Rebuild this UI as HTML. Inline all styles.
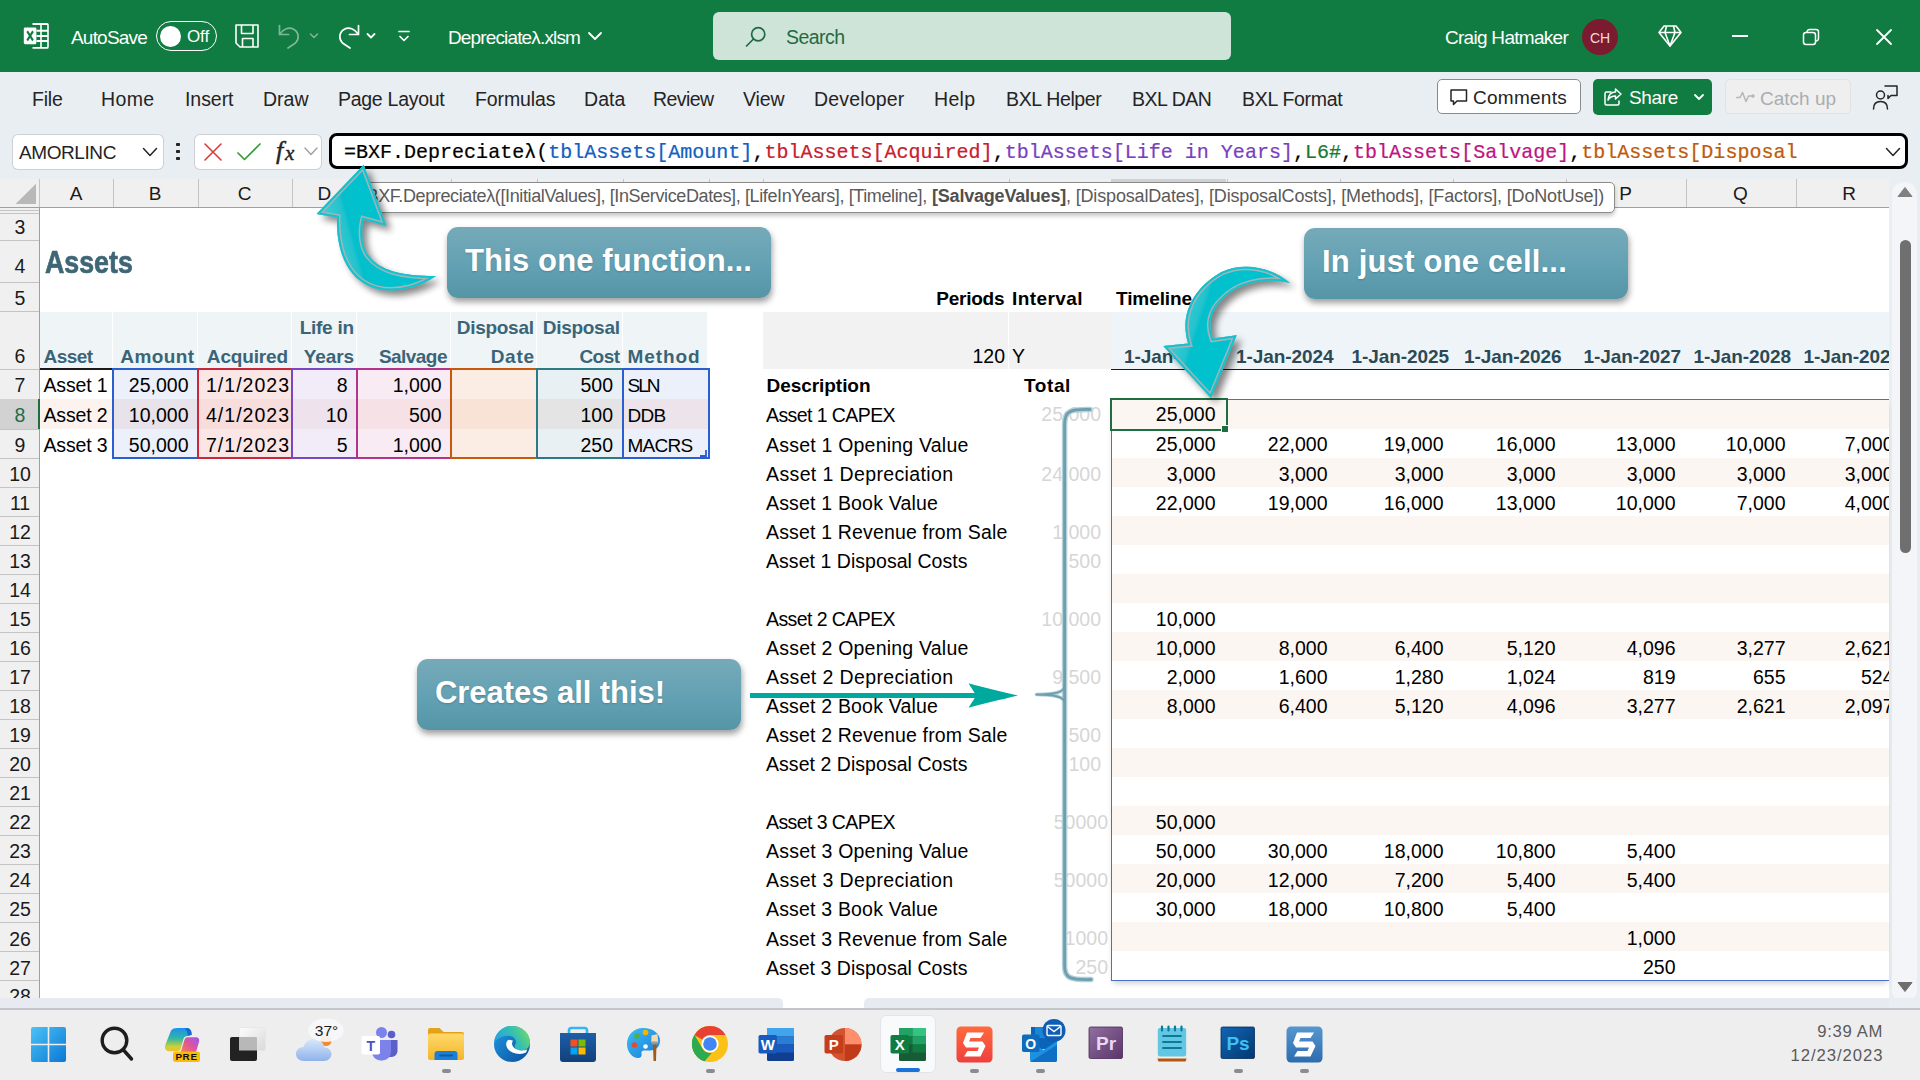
<!DOCTYPE html>
<html><head><meta charset="utf-8"><title>DepreciateLambda.xlsm - Excel</title>
<style>
html,body{margin:0;padding:0;}
body{width:1920px;height:1080px;overflow:hidden;position:relative;background:#fff;font-family:'Liberation Sans',sans-serif;}
div,span.t,svg{position:absolute;}
div{box-sizing:border-box;}
span.t{white-space:pre;}
</style></head>
<body>
<div style="left:0px;top:0px;width:1920px;height:72px;background:#107c41;"></div>
<div style="left:0px;top:72px;width:1920px;height:107px;background:#e9eef2;"></div>
<svg style="left:21.8px;top:19.8px" width="28" height="31.8" viewBox="0 0 28 26" preserveAspectRatio="none" fill="none" stroke="#fff" stroke-width="1.6">
<path d="M10.5 3.2H25a1 1 0 0 1 1 1v17.6a1 1 0 0 1-1 1H10.5"/><path d="M14.5 8.8H26M14.5 13H26M14.5 17.2H26M19 3.2v19.6"/>
<rect x="1.8" y="6.2" width="12.6" height="13.6" rx="1.2" fill="#fff" stroke="none"/>
<path d="M5.2 9.2l5.8 7.6M11 9.2l-5.8 7.6" stroke="#107c41" stroke-width="2"/></svg>
<span class="t" style="left:71.00px;top:24.50px;line-height:25px;font-size:19px;color:#fff;letter-spacing:-0.801px;">AutoSave</span>
<div style="left:156px;top:21px;width:61px;height:30px;border:1.5px solid #fff;border-radius:15px;"></div>
<div style="left:159.7px;top:25.5px;width:21px;height:21px;background:#fff;border-radius:10.5px;"></div>
<span class="t" style="left:187.00px;top:26.00px;line-height:22px;font-size:17px;color:#fff;letter-spacing:-0.125px;">Off</span>
<svg style="left:234px;top:23px" width="26" height="26" viewBox="0 0 26 26" fill="none" stroke="#fff" stroke-width="1.6" stroke-linejoin="round">
<path d="M2 2H24V24H6L2 20z"/>
<path d="M7.500 2v8.500h11.500V2M8.500 24v-8.500h10.500V24"/></svg>
<svg style="left:277px;top:22px" width="46" height="28" viewBox="0 0 46 28" fill="none" stroke="#7fb69a" stroke-width="1.7" stroke-linecap="round" stroke-linejoin="round">
<path d="M2.500 3.500v9h9"/><path d="M2.800 12.300C6 7 12 4.500 17 7.500c5 3 5.500 9.500 1.500 13.500L11 26"/>
<path d="M33.500 12l3.500 3.500 3.500-3.500" stroke-width="1.5"/></svg>
<svg style="left:334px;top:22px" width="46" height="28" viewBox="0 0 46 28" fill="none" stroke="#fff" stroke-width="1.7" stroke-linecap="round" stroke-linejoin="round">
<path d="M24.500 3.500v9h-9"/><path d="M24.200 12.300C21 7 15 4.500 10 7.500c-5 3-5.500 9.500-1.500 13.500L16 26"/>
<path d="M33.500 12l3.500 3.500 3.500-3.500" stroke-width="1.8"/></svg>
<svg style="left:397px;top:29px" width="14" height="14" viewBox="0 0 14 14" fill="none" stroke="#fff" stroke-width="1.7" stroke-linecap="round" stroke-linejoin="round">
<path d="M2 2.500h10"/><path d="M3 7.500l4 4 4-4"/></svg>
<span class="t" style="left:448.00px;top:24.50px;line-height:25px;font-size:19px;color:#fff;letter-spacing:-0.857px;">Depreciateλ.xlsm</span>
<svg style="left:587px;top:31px" width="16" height="10" viewBox="0 0 16 10" fill="none" stroke="#fff" stroke-width="1.8" stroke-linecap="round" stroke-linejoin="round"><path d="M2 2l6 6 6-6"/></svg>
<div style="left:713px;top:12px;width:518px;height:48px;background:#cfe4d8;border-radius:6px;"></div>
<svg style="left:744px;top:25px" width="24" height="24" viewBox="0 0 24 24" fill="none" stroke="#1f6a43" stroke-width="1.7" stroke-linecap="round"><circle cx="14.200" cy="9.200" r="6.600"/><path d="M9.500 14L2.500 21"/></svg>
<span class="t" style="left:786.00px;top:24.50px;line-height:25px;font-size:19.5px;color:#1f6a43;letter-spacing:-0.549px;">Search</span>
<span class="t" style="left:1445.00px;top:24.50px;line-height:25px;font-size:19px;color:#fff;letter-spacing:-0.718px;">Craig Hatmaker</span>
<div style="left:1582px;top:19px;width:36px;height:36px;background:#7b1b2f;border-radius:18px;"></div>
<span class="t" style="left:1589.88px;top:28.50px;line-height:18px;font-size:14px;color:#f3d9de;">CH</span>
<svg style="left:1657px;top:24px" width="26" height="24" viewBox="0 0 26 24" fill="none" stroke="#fff" stroke-width="1.6" stroke-linejoin="round">
<path d="M7 2h12l5 6.500L13 22 2 8.500z"/><path d="M2 8.500h22M9.500 2L8 8.500 13 22l5-13.500L16.500 2"/></svg>
<div style="left:1732px;top:35px;width:16px;height:2px;background:#fff;"></div>
<svg style="left:1802px;top:28px" width="18" height="18" viewBox="0 0 18 18" fill="none" stroke="#fff" stroke-width="1.5"><rect x="1.500" y="4.500" width="12" height="12" rx="2.500"/><path d="M5 4.500V4a2.500 2.500 0 0 1 2.500-2.500H14A2.500 2.500 0 0 1 16.500 4v6.500A2.500 2.500 0 0 1 14 13h-.5"/></svg>
<svg style="left:1875px;top:28px" width="18" height="18" viewBox="0 0 18 18" fill="none" stroke="#fff" stroke-width="1.800" stroke-linecap="round"><path d="M2 2l14 14M16 2L2 16"/></svg>
<span class="t" style="left:32.00px;top:86.90px;line-height:25px;font-size:19.5px;color:#242424;letter-spacing:-0.230px;">File</span>
<span class="t" style="left:101.00px;top:86.90px;line-height:25px;font-size:19.5px;color:#242424;letter-spacing:0.367px;">Home</span>
<span class="t" style="left:185.00px;top:86.90px;line-height:25px;font-size:19.5px;color:#242424;letter-spacing:-0.047px;">Insert</span>
<span class="t" style="left:263.00px;top:86.90px;line-height:25px;font-size:19.5px;color:#242424;">Draw</span>
<span class="t" style="left:338.00px;top:86.90px;line-height:25px;font-size:19.5px;color:#242424;letter-spacing:-0.274px;">Page Layout</span>
<span class="t" style="left:475.00px;top:86.90px;line-height:25px;font-size:19.5px;color:#242424;letter-spacing:-0.098px;">Formulas</span>
<span class="t" style="left:584.00px;top:86.90px;line-height:25px;font-size:19.5px;color:#242424;letter-spacing:0.074px;">Data</span>
<span class="t" style="left:653.00px;top:86.90px;line-height:25px;font-size:19.5px;color:#242424;letter-spacing:-0.573px;">Review</span>
<span class="t" style="left:743.00px;top:86.90px;line-height:25px;font-size:19.5px;color:#242424;letter-spacing:-0.105px;">View</span>
<span class="t" style="left:814.00px;top:86.90px;line-height:25px;font-size:19.5px;color:#242424;letter-spacing:0.179px;">Developer</span>
<span class="t" style="left:934.00px;top:86.90px;line-height:25px;font-size:19.5px;color:#242424;letter-spacing:0.348px;">Help</span>
<span class="t" style="left:1006.00px;top:86.90px;line-height:25px;font-size:19.5px;color:#242424;letter-spacing:-0.350px;">BXL Helper</span>
<span class="t" style="left:1132.00px;top:86.90px;line-height:25px;font-size:19.5px;color:#242424;letter-spacing:-0.462px;">BXL DAN</span>
<span class="t" style="left:1242.00px;top:86.90px;line-height:25px;font-size:19.5px;color:#242424;letter-spacing:-0.281px;">BXL Format</span>
<div style="left:1437px;top:78.7px;width:144px;height:35.6px;background:#fff;border:1px solid #8a8a8a;border-radius:5px;"></div>
<svg style="left:1449px;top:88px" width="20" height="19" viewBox="0 0 20 19" fill="none" stroke="#242424" stroke-width="1.500" stroke-linejoin="round"><path d="M2 2h15.500v11H8l-3.500 3.500V13H2z"/></svg>
<span class="t" style="left:1473.00px;top:85.00px;line-height:25px;font-size:19px;color:#242424;letter-spacing:0.268px;">Comments</span>
<div style="left:1593px;top:79px;width:119px;height:36px;background:#107c41;border-radius:5px;"></div>
<svg style="left:1603px;top:87px" width="20" height="20" viewBox="0 0 20 20" fill="none" stroke="#fff" stroke-width="1.500" stroke-linejoin="round" stroke-linecap="round"><path d="M8 5H3.500A1.500 1.500 0 0 0 2 6.500v10A1.500 1.500 0 0 0 3.500 18h11a1.500 1.500 0 0 0 1.500-1.500V14"/><path d="M12.500 2l5.500 5-5.500 5V9c-4 0-6 1.500-7.500 4 .5-5 3-8 7.500-8z"/></svg>
<span class="t" style="left:1629.00px;top:85.00px;line-height:25px;font-size:19px;color:#fff;letter-spacing:-0.341px;">Share</span>
<svg style="left:1693px;top:93px" width="12" height="8" viewBox="0 0 12 8" fill="none" stroke="#fff" stroke-width="1.800" stroke-linecap="round" stroke-linejoin="round"><path d="M2 2l4 4 4-4"/></svg>
<div style="left:1724.5px;top:79.3px;width:126px;height:35.2px;background:#efefef;border:1px solid #e2e2e2;border-radius:5px;"></div>
<svg style="left:1735px;top:90px" width="22" height="14" viewBox="0 0 22 14" fill="none" stroke="#b3b7bb" stroke-width="1.500" stroke-linejoin="round" stroke-linecap="round"><path d="M1.500 7.500h3.500l2.500-5 3.500 9 2.500-5.500h3"/><circle cx="18" cy="6" r="1" fill="#b3b7bb"/></svg>
<span class="t" style="left:1760.00px;top:85.50px;line-height:25px;font-size:19px;color:#a9adb1;letter-spacing:-0.006px;">Catch up</span>
<svg style="left:1871px;top:84px" width="28" height="28" viewBox="0 0 28 28" fill="none" stroke="#242424" stroke-width="1.500" stroke-linejoin="round" stroke-linecap="round"><circle cx="9.500" cy="11" r="4"/><path d="M2.500 25c0-5 3-7.500 7-7.500s7 2.500 7 7.500"/><path d="M14 2h12v9.500h-6l-3 3V11.500"/></svg>
<div style="left:13px;top:135px;width:150px;height:33.5px;background:#fff;border-radius:5px;box-shadow:0 0 0 1px #cdd1d5;"></div>
<span class="t" style="left:19.00px;top:139.50px;line-height:25px;font-size:19px;color:#242424;letter-spacing:-0.412px;">AMORLINC</span>
<svg style="left:141px;top:146px" width="18" height="12" viewBox="0 0 18 12" fill="none" stroke="#242424" stroke-width="1.500" stroke-linecap="round" stroke-linejoin="round"><path d="M2.500 2.500l6.500 7 6.500-7"/></svg>
<div style="left:176.4px;top:143.2px;width:3.2px;height:3.2px;background:#242424;border-radius:0.800px;"></div>
<div style="left:176.4px;top:150.2px;width:3.2px;height:3.2px;background:#242424;border-radius:0.800px;"></div>
<div style="left:176.4px;top:157.2px;width:3.2px;height:3.2px;background:#242424;border-radius:0.800px;"></div>
<div style="left:195px;top:135px;width:126px;height:33.5px;background:#fff;border-radius:5px;box-shadow:0 0 0 1px #cdd1d5;"></div>
<svg style="left:203px;top:142px" width="20" height="20" viewBox="0 0 20 20" fill="none" stroke="#d83b3b" stroke-width="1.600" stroke-linecap="round"><path d="M2 2l16 16M18 2L2 18"/></svg>
<svg style="left:236px;top:142px" width="26" height="20" viewBox="0 0 26 20" fill="none" stroke="#3a9a3a" stroke-width="1.700" stroke-linecap="round" stroke-linejoin="round"><path d="M2 11l6.500 6.500L24 2"/></svg>
<span class="t" style="left:276.00px;top:134.00px;line-height:34px;font-size:26px;color:#242424;font-style:italic;font-family:'Liberation Serif';-webkit-text-stroke:0.450px #242424;">f</span>
<span class="t" style="left:285.00px;top:139.50px;line-height:27px;font-size:21px;color:#242424;font-style:italic;font-family:'Liberation Serif';-webkit-text-stroke:0.450px #242424;">x</span>
<svg style="left:303px;top:146px" width="16" height="11" viewBox="0 0 16 11" fill="none" stroke="#a0a0a0" stroke-width="1.400" stroke-linecap="round" stroke-linejoin="round"><path d="M2 2l6 6.500 6-6.500"/></svg>
<div style="left:328.5px;top:133px;width:1579.5px;height:36.3px;background:#fff;border:3px solid #000;border-radius:8px;"></div>
<svg style="left:1884px;top:146px" width="18" height="12" viewBox="0 0 18 12" fill="none" stroke="#242424" stroke-width="1.500" stroke-linecap="round" stroke-linejoin="round"><path d="M2.500 2.500l6.500 7 6.500-7"/></svg>
<span class="t" style="left:344px;top:139.800px;line-height:26px;font-size:20.02px;font-family:'Liberation Mono',monospace;-webkit-text-stroke:0.220px currentColor;"><span style="color:#000">=BXF.Depreciateλ(</span><span style="color:#1160c2">tblAssets[Amount]</span><span style="color:#000">,</span><span style="color:#c9202c">tblAssets[Acquired]</span><span style="color:#000">,</span><span style="color:#7a3fc0">tblAssets[Life in Years]</span><span style="color:#000">,</span><span style="color:#1b7a2f">L6#</span><span style="color:#000">,</span><span style="color:#c0147f">tblAssets[Salvage]</span><span style="color:#000">,</span><span style="color:#c05a0a">tblAssets[Disposal</span></span>
<div style="left:0px;top:179px;width:1889px;height:29px;background:#f0f0f0;border-bottom:1px solid #9f9f9f;"></div>
<svg style="left:15px;top:183px" width="22" height="22" viewBox="0 0 22 22"><path d="M0.500 21L21 0.800V21z" fill="#b8b8b8"/></svg>
<div style="left:112.7px;top:179px;width:1px;height:28px;background:#c4c4c4;"></div>
<span class="t" style="left:69.66px;top:181.00px;line-height:25px;font-size:19px;color:#1a1a1a;">A</span>
<div style="left:197.7px;top:179px;width:1px;height:28px;background:#c4c4c4;"></div>
<span class="t" style="left:148.66px;top:181.00px;line-height:25px;font-size:19px;color:#1a1a1a;">B</span>
<div style="left:291.9px;top:179px;width:1px;height:28px;background:#c4c4c4;"></div>
<span class="t" style="left:237.73px;top:181.00px;line-height:25px;font-size:19px;color:#1a1a1a;">C</span>
<div style="left:357.0px;top:179px;width:1px;height:28px;background:#c4c4c4;"></div>
<span class="t" style="left:317.38px;top:181.00px;line-height:25px;font-size:19px;color:#1a1a1a;">D</span>
<div style="left:451.0px;top:179px;width:1px;height:28px;background:#c4c4c4;"></div>
<div style="left:537.1px;top:179px;width:1px;height:28px;background:#c4c4c4;"></div>
<div style="left:623.1px;top:179px;width:1px;height:28px;background:#c4c4c4;"></div>
<div style="left:708.5px;top:179px;width:1px;height:28px;background:#c4c4c4;"></div>
<div style="left:763.2px;top:179px;width:1px;height:28px;background:#c4c4c4;"></div>
<div style="left:1008.5px;top:179px;width:1px;height:28px;background:#c4c4c4;"></div>
<div style="left:1111.0px;top:179px;width:1px;height:28px;background:#c4c4c4;"></div>
<div style="left:1226.7px;top:179px;width:1px;height:28px;background:#c4c4c4;"></div>
<div style="left:1340.2px;top:179px;width:1px;height:28px;background:#c4c4c4;"></div>
<div style="left:1453.2px;top:179px;width:1px;height:28px;background:#c4c4c4;"></div>
<div style="left:1565.7px;top:179px;width:1px;height:28px;background:#c4c4c4;"></div>
<div style="left:1685.7px;top:179px;width:1px;height:28px;background:#c4c4c4;"></div>
<span class="t" style="left:1619.16px;top:181.00px;line-height:25px;font-size:19px;color:#1a1a1a;">P</span>
<div style="left:1795.7px;top:179px;width:1px;height:28px;background:#c4c4c4;"></div>
<span class="t" style="left:1733.11px;top:181.00px;line-height:25px;font-size:19px;color:#1a1a1a;">Q</span>
<div style="left:1905.2px;top:179px;width:1px;height:28px;background:#c4c4c4;"></div>
<span class="t" style="left:1842.13px;top:181.00px;line-height:25px;font-size:19px;color:#1a1a1a;">R</span>
<div style="left:39px;top:179px;width:1px;height:28px;background:#c4c4c4;"></div>
<div style="left:1110.8px;top:179px;width:115.20000000000005px;height:28px;background:#d2d2d2;border-bottom:2px solid #1e6e42;"></div>
<div style="left:0px;top:208px;width:1889px;height:800px;background:#fff;"></div>
<div style="left:0px;top:208px;width:39.5px;height:790px;background:#f0f0f0;border-right:1px solid #9f9f9f;"></div>
<div style="left:0px;top:209.5px;width:39px;height:1px;background:#c4c4c4;"></div>
<div style="left:0px;top:212.5px;width:39px;height:1px;background:#c4c4c4;"></div>
<div style="left:0px;top:240.0px;width:39px;height:1px;background:#c4c4c4;"></div>
<div style="left:0px;top:282.1px;width:39px;height:1px;background:#c4c4c4;"></div>
<div style="left:0px;top:310.7px;width:39px;height:1px;background:#c4c4c4;"></div>
<div style="left:0px;top:368.8px;width:39px;height:1px;background:#c4c4c4;"></div>
<div style="left:0px;top:399px;width:39px;height:1px;background:#c4c4c4;"></div>
<div style="left:0px;top:428.5px;width:39px;height:1px;background:#c4c4c4;"></div>
<div style="left:0px;top:457.6px;width:39px;height:1px;background:#c4c4c4;"></div>
<div style="left:0px;top:486.63px;width:39px;height:1px;background:#c4c4c4;"></div>
<div style="left:0px;top:515.66px;width:39px;height:1px;background:#c4c4c4;"></div>
<div style="left:0px;top:544.69px;width:39px;height:1px;background:#c4c4c4;"></div>
<div style="left:0px;top:573.72px;width:39px;height:1px;background:#c4c4c4;"></div>
<div style="left:0px;top:602.75px;width:39px;height:1px;background:#c4c4c4;"></div>
<div style="left:0px;top:631.78px;width:39px;height:1px;background:#c4c4c4;"></div>
<div style="left:0px;top:660.81px;width:39px;height:1px;background:#c4c4c4;"></div>
<div style="left:0px;top:689.84px;width:39px;height:1px;background:#c4c4c4;"></div>
<div style="left:0px;top:718.87px;width:39px;height:1px;background:#c4c4c4;"></div>
<div style="left:0px;top:747.9px;width:39px;height:1px;background:#c4c4c4;"></div>
<div style="left:0px;top:776.93px;width:39px;height:1px;background:#c4c4c4;"></div>
<div style="left:0px;top:805.96px;width:39px;height:1px;background:#c4c4c4;"></div>
<div style="left:0px;top:834.99px;width:39px;height:1px;background:#c4c4c4;"></div>
<div style="left:0px;top:864.02px;width:39px;height:1px;background:#c4c4c4;"></div>
<div style="left:0px;top:893.05px;width:39px;height:1px;background:#c4c4c4;"></div>
<div style="left:0px;top:922.08px;width:39px;height:1px;background:#c4c4c4;"></div>
<div style="left:0px;top:951.11px;width:39px;height:1px;background:#c4c4c4;"></div>
<div style="left:0px;top:980.14px;width:39px;height:1px;background:#c4c4c4;"></div>
<div style="left:0px;top:399px;width:39.5px;height:29.5px;background:#d2d2d2;border-right:2px solid #1e6e42;"></div>
<span class="t" style="left:14.57px;top:214.75px;line-height:25px;font-size:19.5px;color:#1a1a1a;">3</span>
<span class="t" style="left:14.57px;top:253.50px;line-height:25px;font-size:19.5px;color:#1a1a1a;">4</span>
<span class="t" style="left:14.57px;top:286.00px;line-height:25px;font-size:19.5px;color:#1a1a1a;">5</span>
<span class="t" style="left:14.57px;top:344.00px;line-height:25px;font-size:19.5px;color:#1a1a1a;">6</span>
<span class="t" style="left:14.57px;top:372.80px;line-height:25px;font-size:19.5px;color:#1a1a1a;">7</span>
<span class="t" style="left:14.57px;top:402.80px;line-height:25px;font-size:19.5px;color:#1e6e42;">8</span>
<span class="t" style="left:14.57px;top:432.80px;line-height:25px;font-size:19.5px;color:#1a1a1a;">9</span>
<span class="t" style="left:9.15px;top:462.03px;line-height:25px;font-size:19.5px;color:#1a1a1a;">10</span>
<span class="t" style="left:9.88px;top:491.06px;line-height:25px;font-size:19.5px;color:#1a1a1a;">11</span>
<span class="t" style="left:9.15px;top:520.09px;line-height:25px;font-size:19.5px;color:#1a1a1a;">12</span>
<span class="t" style="left:9.15px;top:549.12px;line-height:25px;font-size:19.5px;color:#1a1a1a;">13</span>
<span class="t" style="left:9.15px;top:578.15px;line-height:25px;font-size:19.5px;color:#1a1a1a;">14</span>
<span class="t" style="left:9.15px;top:607.18px;line-height:25px;font-size:19.5px;color:#1a1a1a;">15</span>
<span class="t" style="left:9.15px;top:636.21px;line-height:25px;font-size:19.5px;color:#1a1a1a;">16</span>
<span class="t" style="left:9.15px;top:665.24px;line-height:25px;font-size:19.5px;color:#1a1a1a;">17</span>
<span class="t" style="left:9.15px;top:694.27px;line-height:25px;font-size:19.5px;color:#1a1a1a;">18</span>
<span class="t" style="left:9.15px;top:723.30px;line-height:25px;font-size:19.5px;color:#1a1a1a;">19</span>
<span class="t" style="left:9.15px;top:752.33px;line-height:25px;font-size:19.5px;color:#1a1a1a;">20</span>
<span class="t" style="left:9.15px;top:781.36px;line-height:25px;font-size:19.5px;color:#1a1a1a;">21</span>
<span class="t" style="left:9.15px;top:810.39px;line-height:25px;font-size:19.5px;color:#1a1a1a;">22</span>
<span class="t" style="left:9.15px;top:839.42px;line-height:25px;font-size:19.5px;color:#1a1a1a;">23</span>
<span class="t" style="left:9.15px;top:868.45px;line-height:25px;font-size:19.5px;color:#1a1a1a;">24</span>
<span class="t" style="left:9.15px;top:897.48px;line-height:25px;font-size:19.5px;color:#1a1a1a;">25</span>
<span class="t" style="left:9.15px;top:926.51px;line-height:25px;font-size:19.5px;color:#1a1a1a;">26</span>
<span class="t" style="left:9.15px;top:955.54px;line-height:25px;font-size:19.5px;color:#1a1a1a;">27</span>
<span class="t" style="left:9.15px;top:983.50px;line-height:25px;font-size:19.5px;color:#1a1a1a;">28</span>
<span class="t" style="left:44.50px;top:241.50px;line-height:41px;font-size:31.5px;color:#3f6676;font-weight:700;transform:scaleX(0.850);transform-origin:0 50%;-webkit-text-stroke:0.700px #3f6676;">Assets</span>
<div style="left:40.0px;top:312px;width:71.5px;height:57px;background:#eff4f7;"></div>
<div style="left:113.0px;top:312px;width:83.5px;height:57px;background:#eff4f7;"></div>
<div style="left:198.0px;top:312px;width:92.69999999999999px;height:57px;background:#eff4f7;"></div>
<div style="left:292.2px;top:312px;width:63.60000000000002px;height:57px;background:#eff4f7;"></div>
<div style="left:357.3px;top:312px;width:92.5px;height:57px;background:#eff4f7;"></div>
<div style="left:451.3px;top:312px;width:84.59999999999997px;height:57px;background:#eff4f7;"></div>
<div style="left:537.4px;top:312px;width:84.5px;height:57px;background:#eff4f7;"></div>
<div style="left:623.4px;top:312px;width:83.89999999999998px;height:57px;background:#eff4f7;"></div>
<div style="left:39.5px;top:368px;width:73px;height:1.5px;background:#1a1a1a;"></div>
<span class="t" style="left:43.50px;top:343.50px;line-height:25px;font-size:19px;color:#3a6577;font-weight:700;letter-spacing:-0.550px;">Asset</span>
<span class="t" style="left:120.37px;top:343.50px;line-height:25px;font-size:19px;color:#3a6577;font-weight:700;letter-spacing:0.372px;">Amount</span>
<span class="t" style="left:206.83px;top:343.50px;line-height:25px;font-size:19px;color:#3a6577;font-weight:700;letter-spacing:-0.170px;">Acquired</span>
<span class="t" style="left:299.72px;top:314.50px;line-height:25px;font-size:19px;color:#3a6577;font-weight:700;letter-spacing:-0.279px;">Life in</span>
<span class="t" style="left:303.85px;top:343.50px;line-height:25px;font-size:19px;color:#3a6577;font-weight:700;letter-spacing:-0.147px;">Years</span>
<span class="t" style="left:378.95px;top:343.50px;line-height:25px;font-size:19px;color:#3a6577;font-weight:700;letter-spacing:-0.547px;">Salvage</span>
<span class="t" style="left:456.72px;top:314.50px;line-height:25px;font-size:19px;color:#3a6577;font-weight:700;letter-spacing:-0.275px;">Disposal</span>
<span class="t" style="left:490.70px;top:343.50px;line-height:25px;font-size:19px;color:#3a6577;font-weight:700;letter-spacing:0.703px;">Date</span>
<span class="t" style="left:542.72px;top:314.50px;line-height:25px;font-size:19px;color:#3a6577;font-weight:700;letter-spacing:-0.275px;">Disposal</span>
<span class="t" style="left:579.44px;top:343.50px;line-height:25px;font-size:19px;color:#3a6577;font-weight:700;letter-spacing:-0.559px;">Cost</span>
<span class="t" style="left:627.50px;top:343.50px;line-height:25px;font-size:19px;color:#3a6577;font-weight:700;letter-spacing:0.909px;">Method</span>
<div style="left:40px;top:399px;width:72.5px;height:29.5px;background:#fdf3ee;"></div>
<div style="left:112.5px;top:368.8px;width:86.0px;height:89.30000000000001px;background:#ecf0fa;"></div>
<div style="left:112.5px;top:399px;width:86.0px;height:29.5px;background:#e8e2ea;"></div>
<div style="left:197.5px;top:368.8px;width:95.19999999999999px;height:89.30000000000001px;background:#fbe6e6;"></div>
<div style="left:197.5px;top:399px;width:95.19999999999999px;height:29.5px;background:#f8dddd;"></div>
<div style="left:291.7px;top:368.8px;width:66.10000000000002px;height:89.30000000000001px;background:#f2ecf8;"></div>
<div style="left:291.7px;top:399px;width:66.10000000000002px;height:29.5px;background:#eee3ec;"></div>
<div style="left:356.8px;top:368.8px;width:95.0px;height:89.30000000000001px;background:#f9ebf3;"></div>
<div style="left:356.8px;top:399px;width:95.0px;height:29.5px;background:#f6e1e6;"></div>
<div style="left:450.8px;top:368.8px;width:87.09999999999997px;height:89.30000000000001px;background:#fbece4;"></div>
<div style="left:450.8px;top:399px;width:87.09999999999997px;height:29.5px;background:#f9e2d6;"></div>
<div style="left:536.9px;top:368.8px;width:87.0px;height:89.30000000000001px;background:#e9f0f3;"></div>
<div style="left:536.9px;top:399px;width:87.0px;height:29.5px;background:#e4e4e4;"></div>
<div style="left:622.9px;top:368.8px;width:86.39999999999998px;height:89.30000000000001px;background:#ecf0fa;"></div>
<div style="left:622.9px;top:399px;width:86.39999999999998px;height:29.5px;background:#ece4ea;"></div>
<div style="left:112.0px;top:368.3px;width:87.0px;height:90.30000000000001px;border:2px solid #2b5fd0;"></div>
<div style="left:197.0px;top:368.3px;width:96.19999999999999px;height:90.30000000000001px;border:2px solid #c9283c;"></div>
<div style="left:291.2px;top:368.3px;width:67.10000000000002px;height:90.30000000000001px;border:2px solid #7a47c1;"></div>
<div style="left:356.3px;top:368.3px;width:96.0px;height:90.30000000000001px;border:2px solid #b5338a;"></div>
<div style="left:450.3px;top:368.3px;width:88.09999999999997px;height:90.30000000000001px;border:2px solid #c8590a;"></div>
<div style="left:536.4px;top:368.3px;width:88.0px;height:90.30000000000001px;border:2px solid #2a7b84;"></div>
<div style="left:622.4px;top:368.3px;width:87.39999999999998px;height:90.30000000000001px;border:2px solid #2b5fd0;"></div>
<svg style="left:699px;top:449px" width="8" height="8" viewBox="0 0 8 8" fill="none" stroke="#2b5fd0" stroke-width="1.800"><path d="M7 1v6H1"/></svg>
<span class="t" style="left:43.50px;top:372.65px;line-height:25px;font-size:19.5px;color:#000;letter-spacing:-0.150px;">Asset 1</span>
<span class="t" style="left:128.84px;top:372.65px;line-height:25px;font-size:19.5px;color:#000;">25,000</span>
<span class="t" style="left:206.01px;top:372.65px;line-height:25px;font-size:19.5px;color:#000;letter-spacing:1.012px;">1/1/2023</span>
<span class="t" style="left:336.64px;top:372.65px;line-height:25px;font-size:19.5px;color:#000;">8</span>
<span class="t" style="left:392.69px;top:372.65px;line-height:25px;font-size:19.5px;color:#000;">1,000</span>
<span class="t" style="left:580.45px;top:372.65px;line-height:25px;font-size:19.5px;color:#000;">500</span>
<span class="t" style="left:627.50px;top:372.65px;line-height:25px;font-size:19px;color:#000;letter-spacing:-1.990px;">SLN</span>
<span class="t" style="left:43.50px;top:403.00px;line-height:25px;font-size:19.5px;color:#000;letter-spacing:-0.150px;">Asset 2</span>
<span class="t" style="left:128.84px;top:403.00px;line-height:25px;font-size:19.5px;color:#000;">10,000</span>
<span class="t" style="left:206.01px;top:403.00px;line-height:25px;font-size:19.5px;color:#000;letter-spacing:1.012px;">4/1/2023</span>
<span class="t" style="left:325.80px;top:403.00px;line-height:25px;font-size:19.5px;color:#000;">10</span>
<span class="t" style="left:408.95px;top:403.00px;line-height:25px;font-size:19.5px;color:#000;">500</span>
<span class="t" style="left:580.45px;top:403.00px;line-height:25px;font-size:19.5px;color:#000;">100</span>
<span class="t" style="left:627.50px;top:403.00px;line-height:25px;font-size:19px;color:#000;letter-spacing:-0.708px;">DDB</span>
<span class="t" style="left:43.50px;top:432.70px;line-height:25px;font-size:19.5px;color:#000;letter-spacing:-0.150px;">Asset 3</span>
<span class="t" style="left:128.84px;top:432.70px;line-height:25px;font-size:19.5px;color:#000;">50,000</span>
<span class="t" style="left:206.01px;top:432.70px;line-height:25px;font-size:19.5px;color:#000;letter-spacing:1.012px;">7/1/2023</span>
<span class="t" style="left:336.64px;top:432.70px;line-height:25px;font-size:19.5px;color:#000;">5</span>
<span class="t" style="left:392.69px;top:432.70px;line-height:25px;font-size:19.5px;color:#000;">1,000</span>
<span class="t" style="left:580.45px;top:432.70px;line-height:25px;font-size:19.5px;color:#000;">250</span>
<span class="t" style="left:627.50px;top:432.70px;line-height:25px;font-size:19px;color:#000;letter-spacing:-0.725px;">MACRS</span>
<div style="left:763px;top:312px;width:244.5px;height:57px;background:#f2f2f2;"></div>
<div style="left:1009px;top:312px;width:101.5px;height:57px;background:#f2f2f2;"></div>
<div style="left:1111px;top:312px;width:778px;height:57.7px;background:#eff4f8;border-bottom:1.500px solid #1a1a1a;"></div>
<span class="t" style="left:936.26px;top:285.50px;line-height:25px;font-size:19px;color:#000;font-weight:700;letter-spacing:-0.243px;">Periods</span>
<span class="t" style="left:1012.00px;top:285.50px;line-height:25px;font-size:19px;color:#000;font-weight:700;letter-spacing:0.426px;">Interval</span>
<span class="t" style="left:1116.00px;top:285.50px;line-height:25px;font-size:19px;color:#000;font-weight:700;letter-spacing:-0.092px;">Timeline</span>
<span class="t" style="left:972.45px;top:343.50px;line-height:25px;font-size:19.5px;color:#000;">120</span>
<span class="t" style="left:1012.00px;top:343.50px;line-height:25px;font-size:19.5px;color:#000;">Y</span>
<span class="t" style="left:766.50px;top:372.50px;line-height:25px;font-size:19px;color:#000;font-weight:700;letter-spacing:-0.048px;">Description</span>
<span class="t" style="left:1024.00px;top:372.50px;line-height:25px;font-size:19px;color:#000;font-weight:700;letter-spacing:0.603px;">Total</span>
<span class="t" style="left:1123.93px;top:343.50px;line-height:25px;font-size:19px;color:#2b4a55;font-weight:700;letter-spacing:-0.073px;">1-Jan-2023</span>
<span class="t" style="left:1235.93px;top:343.50px;line-height:25px;font-size:19px;color:#2b4a55;font-weight:700;letter-spacing:-0.073px;">1-Jan-2024</span>
<span class="t" style="left:1351.43px;top:343.50px;line-height:25px;font-size:19px;color:#2b4a55;font-weight:700;letter-spacing:-0.073px;">1-Jan-2025</span>
<span class="t" style="left:1463.93px;top:343.50px;line-height:25px;font-size:19px;color:#2b4a55;font-weight:700;letter-spacing:-0.073px;">1-Jan-2026</span>
<span class="t" style="left:1583.43px;top:343.50px;line-height:25px;font-size:19px;color:#2b4a55;font-weight:700;letter-spacing:-0.073px;">1-Jan-2027</span>
<span class="t" style="left:1693.43px;top:343.50px;line-height:25px;font-size:19px;color:#2b4a55;font-weight:700;letter-spacing:-0.073px;">1-Jan-2028</span>
<span class="t" style="left:1803.43px;top:343.50px;line-height:25px;font-size:19px;color:#2b4a55;font-weight:700;letter-spacing:-0.073px;">1-Jan-2029</span>
<div style="left:1111px;top:399px;width:778px;height:29.5px;background:#fcf6f3;"></div>
<div style="left:1111px;top:457.6px;width:778px;height:29.029999999999973px;background:#fcf6f3;"></div>
<div style="left:1111px;top:515.66px;width:778px;height:29.030000000000086px;background:#fcf6f3;"></div>
<div style="left:1111px;top:573.72px;width:778px;height:29.029999999999973px;background:#fcf6f3;"></div>
<div style="left:1111px;top:631.78px;width:778px;height:29.029999999999973px;background:#fcf6f3;"></div>
<div style="left:1111px;top:689.84px;width:778px;height:29.029999999999973px;background:#fcf6f3;"></div>
<div style="left:1111px;top:747.9px;width:778px;height:29.029999999999973px;background:#fcf6f3;"></div>
<div style="left:1111px;top:805.96px;width:778px;height:29.029999999999973px;background:#fcf6f3;"></div>
<div style="left:1111px;top:864.02px;width:778px;height:29.029999999999973px;background:#fcf6f3;"></div>
<div style="left:1111px;top:922.08px;width:778px;height:29.029999999999973px;background:#fcf6f3;"></div>
<span class="t" style="left:766.00px;top:402.60px;line-height:25px;font-size:19.5px;color:#000;letter-spacing:-0.582px;">Asset 1 CAPEX</span>
<span class="t" style="left:766.00px;top:432.60px;line-height:25px;font-size:19.5px;color:#000;letter-spacing:0.213px;">Asset 1 Opening Value</span>
<span class="t" style="left:766.00px;top:462.03px;line-height:25px;font-size:19.5px;color:#000;letter-spacing:0.378px;">Asset 1 Depreciation</span>
<span class="t" style="left:766.00px;top:491.06px;line-height:25px;font-size:19.5px;color:#000;letter-spacing:0.181px;">Asset 1 Book Value</span>
<span class="t" style="left:766.00px;top:520.09px;line-height:25px;font-size:19.5px;color:#000;letter-spacing:0.165px;">Asset 1 Revenue from Sale</span>
<span class="t" style="left:766.00px;top:549.12px;line-height:25px;font-size:19.5px;color:#000;letter-spacing:0.045px;">Asset 1 Disposal Costs</span>
<span class="t" style="left:766.00px;top:607.18px;line-height:25px;font-size:19.5px;color:#000;letter-spacing:-0.582px;">Asset 2 CAPEX</span>
<span class="t" style="left:766.00px;top:636.21px;line-height:25px;font-size:19.5px;color:#000;letter-spacing:0.213px;">Asset 2 Opening Value</span>
<span class="t" style="left:766.00px;top:665.24px;line-height:25px;font-size:19.5px;color:#000;letter-spacing:0.378px;">Asset 2 Depreciation</span>
<span class="t" style="left:766.00px;top:694.27px;line-height:25px;font-size:19.5px;color:#000;letter-spacing:0.181px;">Asset 2 Book Value</span>
<span class="t" style="left:766.00px;top:723.30px;line-height:25px;font-size:19.5px;color:#000;letter-spacing:0.165px;">Asset 2 Revenue from Sale</span>
<span class="t" style="left:766.00px;top:752.33px;line-height:25px;font-size:19.5px;color:#000;letter-spacing:0.045px;">Asset 2 Disposal Costs</span>
<span class="t" style="left:766.00px;top:810.39px;line-height:25px;font-size:19.5px;color:#000;letter-spacing:-0.582px;">Asset 3 CAPEX</span>
<span class="t" style="left:766.00px;top:839.42px;line-height:25px;font-size:19.5px;color:#000;letter-spacing:0.213px;">Asset 3 Opening Value</span>
<span class="t" style="left:766.00px;top:868.45px;line-height:25px;font-size:19.5px;color:#000;letter-spacing:0.378px;">Asset 3 Depreciation</span>
<span class="t" style="left:766.00px;top:897.48px;line-height:25px;font-size:19.5px;color:#000;letter-spacing:0.181px;">Asset 3 Book Value</span>
<span class="t" style="left:766.00px;top:926.51px;line-height:25px;font-size:19.5px;color:#000;letter-spacing:0.165px;">Asset 3 Revenue from Sale</span>
<span class="t" style="left:766.00px;top:955.54px;line-height:25px;font-size:19.5px;color:#000;letter-spacing:0.045px;">Asset 3 Disposal Costs</span>
<span class="t" style="left:1041.34px;top:402.30px;line-height:25px;font-size:19.5px;color:#d6d6d6;">25,000</span>
<span class="t" style="left:1041.34px;top:461.73px;line-height:25px;font-size:19.5px;color:#d6d6d6;">24,000</span>
<span class="t" style="left:1052.19px;top:519.79px;line-height:25px;font-size:19.5px;color:#d6d6d6;">1,000</span>
<span class="t" style="left:1068.45px;top:548.82px;line-height:25px;font-size:19.5px;color:#d6d6d6;">500</span>
<span class="t" style="left:1041.34px;top:606.88px;line-height:25px;font-size:19.5px;color:#d6d6d6;">10,000</span>
<span class="t" style="left:1052.19px;top:664.94px;line-height:25px;font-size:19.5px;color:#d6d6d6;">9,500</span>
<span class="t" style="left:1068.45px;top:723.00px;line-height:25px;font-size:19.5px;color:#d6d6d6;">500</span>
<span class="t" style="left:1068.45px;top:752.03px;line-height:25px;font-size:19.5px;color:#d6d6d6;">100</span>
<span class="t" style="left:1053.77px;top:810.09px;line-height:25px;font-size:19.5px;color:#d6d6d6;">50000</span>
<span class="t" style="left:1053.77px;top:868.15px;line-height:25px;font-size:19.5px;color:#d6d6d6;">50000</span>
<span class="t" style="left:1064.61px;top:926.21px;line-height:25px;font-size:19.5px;color:#d6d6d6;">1000</span>
<span class="t" style="left:1075.45px;top:955.24px;line-height:25px;font-size:19.5px;color:#d6d6d6;">250</span>
<span class="t" style="left:1155.84px;top:402.30px;line-height:25px;font-size:19.5px;color:#000;">25,000</span>
<span class="t" style="left:1155.84px;top:432.30px;line-height:25px;font-size:19.5px;color:#000;">25,000</span>
<span class="t" style="left:1267.84px;top:432.30px;line-height:25px;font-size:19.5px;color:#000;">22,000</span>
<span class="t" style="left:1383.84px;top:432.30px;line-height:25px;font-size:19.5px;color:#000;">19,000</span>
<span class="t" style="left:1495.84px;top:432.30px;line-height:25px;font-size:19.5px;color:#000;">16,000</span>
<span class="t" style="left:1615.84px;top:432.30px;line-height:25px;font-size:19.5px;color:#000;">13,000</span>
<span class="t" style="left:1725.84px;top:432.30px;line-height:25px;font-size:19.5px;color:#000;">10,000</span>
<span class="t" style="left:1844.69px;top:432.30px;line-height:25px;font-size:19.5px;color:#000;">7,000</span>
<span class="t" style="left:1166.69px;top:461.73px;line-height:25px;font-size:19.5px;color:#000;">3,000</span>
<span class="t" style="left:1278.69px;top:461.73px;line-height:25px;font-size:19.5px;color:#000;">3,000</span>
<span class="t" style="left:1394.69px;top:461.73px;line-height:25px;font-size:19.5px;color:#000;">3,000</span>
<span class="t" style="left:1506.69px;top:461.73px;line-height:25px;font-size:19.5px;color:#000;">3,000</span>
<span class="t" style="left:1626.69px;top:461.73px;line-height:25px;font-size:19.5px;color:#000;">3,000</span>
<span class="t" style="left:1736.69px;top:461.73px;line-height:25px;font-size:19.5px;color:#000;">3,000</span>
<span class="t" style="left:1844.69px;top:461.73px;line-height:25px;font-size:19.5px;color:#000;">3,000</span>
<span class="t" style="left:1155.84px;top:490.76px;line-height:25px;font-size:19.5px;color:#000;">22,000</span>
<span class="t" style="left:1267.84px;top:490.76px;line-height:25px;font-size:19.5px;color:#000;">19,000</span>
<span class="t" style="left:1383.84px;top:490.76px;line-height:25px;font-size:19.5px;color:#000;">16,000</span>
<span class="t" style="left:1495.84px;top:490.76px;line-height:25px;font-size:19.5px;color:#000;">13,000</span>
<span class="t" style="left:1615.84px;top:490.76px;line-height:25px;font-size:19.5px;color:#000;">10,000</span>
<span class="t" style="left:1736.69px;top:490.76px;line-height:25px;font-size:19.5px;color:#000;">7,000</span>
<span class="t" style="left:1844.69px;top:490.76px;line-height:25px;font-size:19.5px;color:#000;">4,000</span>
<span class="t" style="left:1155.84px;top:606.88px;line-height:25px;font-size:19.5px;color:#000;">10,000</span>
<span class="t" style="left:1155.84px;top:635.91px;line-height:25px;font-size:19.5px;color:#000;">10,000</span>
<span class="t" style="left:1278.69px;top:635.91px;line-height:25px;font-size:19.5px;color:#000;">8,000</span>
<span class="t" style="left:1394.69px;top:635.91px;line-height:25px;font-size:19.5px;color:#000;">6,400</span>
<span class="t" style="left:1506.69px;top:635.91px;line-height:25px;font-size:19.5px;color:#000;">5,120</span>
<span class="t" style="left:1626.69px;top:635.91px;line-height:25px;font-size:19.5px;color:#000;">4,096</span>
<span class="t" style="left:1736.69px;top:635.91px;line-height:25px;font-size:19.5px;color:#000;">3,277</span>
<span class="t" style="left:1844.69px;top:635.91px;line-height:25px;font-size:19.5px;color:#000;">2,621</span>
<span class="t" style="left:1166.69px;top:664.94px;line-height:25px;font-size:19.5px;color:#000;">2,000</span>
<span class="t" style="left:1278.69px;top:664.94px;line-height:25px;font-size:19.5px;color:#000;">1,600</span>
<span class="t" style="left:1394.69px;top:664.94px;line-height:25px;font-size:19.5px;color:#000;">1,280</span>
<span class="t" style="left:1506.69px;top:664.94px;line-height:25px;font-size:19.5px;color:#000;">1,024</span>
<span class="t" style="left:1642.95px;top:664.94px;line-height:25px;font-size:19.5px;color:#000;">819</span>
<span class="t" style="left:1752.95px;top:664.94px;line-height:25px;font-size:19.5px;color:#000;">655</span>
<span class="t" style="left:1860.95px;top:664.94px;line-height:25px;font-size:19.5px;color:#000;">524</span>
<span class="t" style="left:1166.69px;top:693.97px;line-height:25px;font-size:19.5px;color:#000;">8,000</span>
<span class="t" style="left:1278.69px;top:693.97px;line-height:25px;font-size:19.5px;color:#000;">6,400</span>
<span class="t" style="left:1394.69px;top:693.97px;line-height:25px;font-size:19.5px;color:#000;">5,120</span>
<span class="t" style="left:1506.69px;top:693.97px;line-height:25px;font-size:19.5px;color:#000;">4,096</span>
<span class="t" style="left:1626.69px;top:693.97px;line-height:25px;font-size:19.5px;color:#000;">3,277</span>
<span class="t" style="left:1736.69px;top:693.97px;line-height:25px;font-size:19.5px;color:#000;">2,621</span>
<span class="t" style="left:1844.69px;top:693.97px;line-height:25px;font-size:19.5px;color:#000;">2,097</span>
<span class="t" style="left:1155.84px;top:810.09px;line-height:25px;font-size:19.5px;color:#000;">50,000</span>
<span class="t" style="left:1155.84px;top:839.12px;line-height:25px;font-size:19.5px;color:#000;">50,000</span>
<span class="t" style="left:1267.84px;top:839.12px;line-height:25px;font-size:19.5px;color:#000;">30,000</span>
<span class="t" style="left:1383.84px;top:839.12px;line-height:25px;font-size:19.5px;color:#000;">18,000</span>
<span class="t" style="left:1495.84px;top:839.12px;line-height:25px;font-size:19.5px;color:#000;">10,800</span>
<span class="t" style="left:1626.69px;top:839.12px;line-height:25px;font-size:19.5px;color:#000;">5,400</span>
<span class="t" style="left:1155.84px;top:868.15px;line-height:25px;font-size:19.5px;color:#000;">20,000</span>
<span class="t" style="left:1267.84px;top:868.15px;line-height:25px;font-size:19.5px;color:#000;">12,000</span>
<span class="t" style="left:1394.69px;top:868.15px;line-height:25px;font-size:19.5px;color:#000;">7,200</span>
<span class="t" style="left:1506.69px;top:868.15px;line-height:25px;font-size:19.5px;color:#000;">5,400</span>
<span class="t" style="left:1626.69px;top:868.15px;line-height:25px;font-size:19.5px;color:#000;">5,400</span>
<span class="t" style="left:1155.84px;top:897.18px;line-height:25px;font-size:19.5px;color:#000;">30,000</span>
<span class="t" style="left:1267.84px;top:897.18px;line-height:25px;font-size:19.5px;color:#000;">18,000</span>
<span class="t" style="left:1383.84px;top:897.18px;line-height:25px;font-size:19.5px;color:#000;">10,800</span>
<span class="t" style="left:1506.69px;top:897.18px;line-height:25px;font-size:19.5px;color:#000;">5,400</span>
<span class="t" style="left:1626.69px;top:926.21px;line-height:25px;font-size:19.5px;color:#000;">1,000</span>
<span class="t" style="left:1642.95px;top:955.24px;line-height:25px;font-size:19.5px;color:#000;">250</span>
<div style="left:1889px;top:179px;width:31px;height:830px;background:#e9eef2;"></div>
<div style="left:1892px;top:182px;width:25px;height:820px;background:#f3f5f8;border-radius:12px;"></div>
<svg style="left:1897px;top:186px" width="16" height="12" viewBox="0 0 16 12"><path d="M8 1.500L15 10.500H1z" fill="#808080" stroke="#808080" stroke-width="1" stroke-linejoin="round"/></svg>
<svg style="left:1897px;top:981px" width="16" height="12" viewBox="0 0 16 12"><path d="M8 10.500L15 1.500H1z" fill="#6e6e6e" stroke="#6e6e6e" stroke-width="1" stroke-linejoin="round"/></svg>
<div style="left:1899.5px;top:240px;width:11.5px;height:313px;background:#6f6f6f;border-radius:6px;"></div>
<div style="left:1110.7px;top:398.7px;width:778.3px;height:582px;border:1.400px solid #4a6fcc;border-right:none;box-shadow:0 4px 6px -2px rgba(0,0,0,0.200);"></div>
<div style="left:1109.5px;top:397.5px;width:118.5px;height:33.5px;border:2.500px solid #1e6e42;"></div>
<div style="left:1221px;top:424.8px;width:8px;height:8px;background:#1e6e42;border:1px solid #fff;"></div>
<div style="left:364px;top:181.5px;width:1251px;height:31.5px;background:#fff;border:1px solid #8c8c8c;border-radius:5px;box-shadow:0 3px 4px rgba(0,0,0,0.22);"></div>
<span class="t" style="left:366.50px;top:184.50px;line-height:23px;font-size:18px;color:#5a5a5a;letter-spacing:-0.380px;">BXF.Depreciateλ([InitialValues], [InServiceDates], [LifeInYears], [Timeline], </span>
<span class="t" style="left:932.00px;top:184.50px;line-height:23px;font-size:18px;color:#4f4f4f;font-weight:700;letter-spacing:-0.205px;">[SalvageValues]</span>
<span class="t" style="left:1066.00px;top:184.50px;line-height:23px;font-size:18px;color:#5a5a5a;letter-spacing:-0.162px;">, [DisposalDates], [DisposalCosts], [Methods], [Factors], [DoNotUse])</span>
<div style="left:447px;top:227px;width:324px;height:70.5px;background:linear-gradient(180deg,#76aab9 0%,#62a1b3 55%,#5595a6 100%);border-radius:11px;box-shadow:1px 4px 6px rgba(0,0,0,0.38);"></div>
<span class="t" style="left:465.00px;top:241.00px;line-height:40px;font-size:31px;color:#fff;font-weight:700;letter-spacing:0.142px;text-shadow:0 1px 2px rgba(0,0,0,0.180);">This one function...</span>
<div style="left:1303.5px;top:228px;width:324.5px;height:70.5px;background:linear-gradient(180deg,#76aab9 0%,#62a1b3 55%,#5595a6 100%);border-radius:11px;box-shadow:1px 4px 6px rgba(0,0,0,0.38);"></div>
<span class="t" style="left:1322.00px;top:242.00px;line-height:40px;font-size:31px;color:#fff;font-weight:700;letter-spacing:0.201px;text-shadow:0 1px 2px rgba(0,0,0,0.180);">In just one cell...</span>
<div style="left:417px;top:659px;width:324px;height:70.5px;background:linear-gradient(180deg,#76aab9 0%,#62a1b3 55%,#5595a6 100%);border-radius:11px;box-shadow:1px 4px 6px rgba(0,0,0,0.38);"></div>
<span class="t" style="left:435.00px;top:673.00px;line-height:40px;font-size:31px;color:#fff;font-weight:700;letter-spacing:-0.051px;text-shadow:0 1px 2px rgba(0,0,0,0.180);">Creates all this!</span>
<svg style="left:290px;top:150px" width="170" height="165" viewBox="290 150 170 165">
<defs>
<linearGradient id="ag1" gradientUnits="userSpaceOnUse" x1="335" y1="250" x2="372" y2="240"><stop offset="0" stop-color="#3ecbd4"/><stop offset="0.450" stop-color="#22c3ce"/><stop offset="0.550" stop-color="#04bfcb"/><stop offset="1" stop-color="#00c2ce"/></linearGradient>
<clipPath id="ac1"><path d="M363.700 164.800 L386.400 225.900 L363.700 219.600 C360.500 232 362 248 369.600 256.700 C380 270 400 276 436 276 C420 287 400 292 383 290 C355 286 336 262 337 217.400 L316.600 214 Z"/></clipPath>
<filter id="sh1" x="-30%" y="-30%" width="170%" height="170%"><feGaussianBlur in="SourceAlpha" stdDeviation="3.500"/><feOffset dx="5" dy="5"/><feComponentTransfer><feFuncA type="linear" slope="0.480"/></feComponentTransfer></filter>
</defs>
<path d="M363.700 164.800 L386.400 225.900 L363.700 219.600 C360.500 232 362 248 369.600 256.700 C380 270 400 276 436 276 C420 287 400 292 383 290 C355 286 336 262 337 217.400 L316.600 214 Z" fill="#000" filter="url(#sh1)"/>
<path d="M363.700 164.800 L386.400 225.900 L363.700 219.600 C360.500 232 362 248 369.600 256.700 C380 270 400 276 436 276 C420 287 400 292 383 290 C355 286 336 262 337 217.400 L316.600 214 Z" fill="url(#ag1)"/>
<g clip-path="url(#ac1)"><path d="M363.700 164.800 L386.400 225.900 L363.700 219.600 C360.500 232 362 248 369.600 256.700 C380 270 400 276 436 276 C420 287 400 292 383 290 C355 286 336 262 337 217.400 L316.600 214 Z" fill="none" stroke="#a2b4b8" stroke-width="7" stroke-linejoin="miter"/><path d="M363.700 164.800 L386.400 225.900 L363.700 219.600 C360.500 232 362 248 369.600 256.700 C380 270 400 276 436 276 C420 287 400 292 383 290 C355 286 336 262 337 217.400 L316.600 214 Z" fill="none" stroke="#10c3cf" stroke-width="4" stroke-linejoin="miter"/></g>
</svg>
<svg style="left:1140px;top:240px" width="180" height="190" viewBox="1140 240 180 190">
<defs>
<linearGradient id="ag2" gradientUnits="userSpaceOnUse" x1="1185" y1="300" x2="1222" y2="312"><stop offset="0" stop-color="#3ecbd4"/><stop offset="0.450" stop-color="#22c3ce"/><stop offset="0.550" stop-color="#04bfcb"/><stop offset="1" stop-color="#00c2ce"/></linearGradient>
<clipPath id="ac2"><path d="M1211 398.100 L1163.300 346 L1188.200 343.600 C1180 318 1190 290 1221 272.200 C1245 261 1272 268 1290 282.900 C1262 277 1236 284 1221 301 C1210 312 1208 326 1213 338.600 L1236.700 335.200 Z"/></clipPath>
<filter id="sh2" x="-30%" y="-30%" width="170%" height="170%"><feGaussianBlur in="SourceAlpha" stdDeviation="3.500"/><feOffset dx="5" dy="5"/><feComponentTransfer><feFuncA type="linear" slope="0.480"/></feComponentTransfer></filter>
</defs>
<path d="M1211 398.100 L1163.300 346 L1188.200 343.600 C1180 318 1190 290 1221 272.200 C1245 261 1272 268 1290 282.900 C1262 277 1236 284 1221 301 C1210 312 1208 326 1213 338.600 L1236.700 335.200 Z" fill="#000" filter="url(#sh2)"/>
<path d="M1211 398.100 L1163.300 346 L1188.200 343.600 C1180 318 1190 290 1221 272.200 C1245 261 1272 268 1290 282.900 C1262 277 1236 284 1221 301 C1210 312 1208 326 1213 338.600 L1236.700 335.200 Z" fill="url(#ag2)"/>
<g clip-path="url(#ac2)"><path d="M1211 398.100 L1163.300 346 L1188.200 343.600 C1180 318 1190 290 1221 272.200 C1245 261 1272 268 1290 282.900 C1262 277 1236 284 1221 301 C1210 312 1208 326 1213 338.600 L1236.700 335.200 Z" fill="none" stroke="#a2b4b8" stroke-width="7" stroke-linejoin="miter"/><path d="M1211 398.100 L1163.300 346 L1188.200 343.600 C1180 318 1190 290 1221 272.200 C1245 261 1272 268 1290 282.900 C1262 277 1236 284 1221 301 C1210 312 1208 326 1213 338.600 L1236.700 335.200 Z" fill="none" stroke="#10c3cf" stroke-width="4" stroke-linejoin="miter"/></g>
</svg>
<svg style="left:745px;top:675px" width="280" height="40" viewBox="745 675 280 40">
<path d="M750 693.100H980v5H750z" fill="#00a99d"/><path d="M968.600 683.200C985 688 1000 691 1018 695.500 1000 700 985 703 968.600 707.800 973 700 975.500 698 975.500 695.500 975.500 693 973 691 968.600 683.200z" fill="#00a99d"/></svg>
<svg style="left:1030px;top:400px" width="70" height="590" viewBox="1030 400 70 590" fill="none" stroke-linecap="round" stroke-linejoin="round">
<path d="M1090 409.500 C1070 409 1064.600 411 1064.600 424 L1064.600 966 C1064.600 978 1070 980 1091 979.500" stroke="#b3cfd7" stroke-width="5.500"/><path d="M1064.600 686 C1064.600 692 1056 694.500 1036.500 694.500 C1056 694.500 1064.600 697 1064.600 703" stroke="#b3cfd7" stroke-width="3.600"/>
<path d="M1090 409.500 C1070 409 1064.600 411 1064.600 424 L1064.600 966 C1064.600 978 1070 980 1091 979.500" stroke="#6d9fae" stroke-width="2.800"/><path d="M1064.600 686 C1064.600 692 1056 694.500 1036.500 694.500 C1056 694.500 1064.600 697 1064.600 703" stroke="#6d9fae" stroke-width="1.800"/>
</svg>
<div style="left:0px;top:998.3px;width:782.7px;height:10.5px;background:#e7eaf0;border-top-right-radius:5px;"></div>
<div style="left:864px;top:998.3px;width:1056px;height:10.5px;background:#e7eaf0;border-top-left-radius:5px;"></div>
<div style="left:1889px;top:998px;width:31px;height:11px;background:#e9eef2;"></div>
<div style="left:0px;top:1008px;width:1920px;height:1.5px;background:#c3c6ca;"></div>
<div style="left:0px;top:1009.5px;width:1920px;height:70.5px;background:#eeeeef;"></div>
<div style="left:880px;top:1015px;width:56px;height:57.5px;background:#f9fafb;border:1px solid #e2e4e8;border-radius:6px;"></div>
<div style="left:896px;top:1068px;width:24px;height:4px;background:#1a73d8;border-radius:2px;"></div>
<div style="left:441.5px;top:1068.75px;width:9px;height:3.75px;background:#8a8c90;border-radius:2px;"></div>
<div style="left:705.5px;top:1068.75px;width:9px;height:3.75px;background:#8a8c90;border-radius:2px;"></div>
<div style="left:969.9px;top:1068.75px;width:9px;height:3.75px;background:#8a8c90;border-radius:2px;"></div>
<div style="left:1035.9px;top:1068.75px;width:9px;height:3.75px;background:#8a8c90;border-radius:2px;"></div>
<div style="left:1233.5px;top:1068.75px;width:9px;height:3.75px;background:#8a8c90;border-radius:2px;"></div>
<div style="left:1299.5px;top:1068.75px;width:9px;height:3.75px;background:#8a8c90;border-radius:2px;"></div>
<svg style="left:31px;top:1027px" width="35" height="35" viewBox="0 0 35 35"><defs><linearGradient id="wg" x1="0" y1="0" x2="1" y2="1"><stop offset="0" stop-color="#4cc2f7"/><stop offset="1" stop-color="#0a78d4"/></linearGradient></defs>
<path fill="url(#wg)" d="M2 0h14.700v16.700H0V2a2 2 0 0 1 2-2zM18.300 0H33a2 2 0 0 1 2 2v14.700H18.300zM0 18.300h16.700V35H2a2 2 0 0 1-2-2zM18.300 18.300H35V33a2 2 0 0 1-2 2H18.300z"/></svg>
<svg style="left:97px;top:1024px" width="40" height="40" viewBox="0 0 40 40" fill="none" stroke="#1d1d1d" stroke-width="3.400" stroke-linecap="round"><circle cx="17.500" cy="16.500" r="12.300"/><path d="M26.500 26l8 9"/></svg>
<svg style="left:164px;top:1027px" width="38" height="36" viewBox="0 0 38 36"><defs>
<linearGradient id="cp1" x1="0" y1="0" x2="0" y2="1"><stop offset="0" stop-color="#1d8ff0"/><stop offset="0.450" stop-color="#33b7a0"/><stop offset="0.800" stop-color="#c9d23a"/><stop offset="1" stop-color="#f2c12e"/></linearGradient>
<linearGradient id="cp2" x1="1" y1="0" x2="0" y2="1"><stop offset="0" stop-color="#9a55f5"/><stop offset="0.500" stop-color="#e0559a"/><stop offset="1" stop-color="#f58a3a"/></linearGradient></defs>
<path fill="url(#cp2)" d="M23.500 10.200h8c3 0 4.300 1.800 3.500 4.600l-2.200 7.800c-.800 2.600-2.600 3.900-5.300 3.900H18.500c-1.500 0-2-.800-1.500-2.300l3-10c.600-2.600 1.700-4 3.500-4z"/>
<path fill="url(#cp1)" d="M7 3.600C8.300 1.800 10.500 1 13.500 1h9.500c3 0 4.800 2.500 4.700 6.800l-5.500 1.500c-1.500.400-2.300 1.300-2.800 2.900l-2.600 9.300c-.600 1.900-1.800 2.700-3.800 2.700H5.500c-3.500 0-5.300-2.400-4.300-6z"/>
<path fill="#1a5fd0" opacity="0.850" d="M20.500 1.200h2.500c3 0 4.800 2.500 4.700 6.800l-4.200.900c.200-3.300-.700-6-3-7.700z"/>
<rect x="9" y="24.500" width="27" height="10.400" rx="2.500" fill="#fbbc05"/>
<text x="22.500" y="33.100" font-family="Liberation Sans" font-weight="700" font-size="9.800" text-anchor="middle" fill="#111" letter-spacing="0.700">PRE</text></svg>
<svg style="left:229px;top:1026px" width="38" height="36" viewBox="0 0 38 36"><defs><linearGradient id="tv" x1="0" y1="0" x2="1" y2="1"><stop offset="0" stop-color="#fdfdfd"/><stop offset="1" stop-color="#d9d9d9"/></linearGradient></defs>
<rect x="10" y="1.500" width="26.500" height="23" rx="2" fill="url(#tv)" stroke="#e4e4e4" stroke-width="0.800"/>
<rect x="1" y="11" width="27" height="24" rx="2" fill="#222"/><rect x="10" y="11" width="18" height="13.500" fill="#c9c9c9" opacity="0.900"/></svg>
<svg style="left:292px;top:1018px" width="52" height="46" viewBox="0 0 52 46"><defs><linearGradient id="cl" x1="0" y1="0" x2="0" y2="1"><stop offset="0" stop-color="#d9e8fb"/><stop offset="1" stop-color="#8fb3ea"/></linearGradient></defs>
<circle cx="34" cy="22.500" r="5.500" fill="#f5892a"/>
<path fill="url(#cl)" d="M12 43c-5 0-8-3-8-7s3-7 7.500-7c1.500-5 5.500-8 10.500-8 5.500 0 9.500 3.500 10.500 8.500 4 0 7 3 7 6.500s-3 7-7.500 7z"/>
<ellipse cx="34" cy="12.300" rx="17.700" ry="11.700" fill="#f6f7f9" opacity="0.930"/>
<text x="34.500" y="17.500" font-family="Liberation Sans" font-size="15.500" text-anchor="middle" fill="#1a1a1a">37°</text></svg>
<svg style="left:361px;top:1026px" width="38" height="36" viewBox="0 0 38 36">
<circle cx="30.500" cy="8.500" r="3.800" fill="#5b5fc7"/><path d="M26 14h10.500v11a6 6 0 0 1-6 6H26z" fill="#5b5fc7"/>
<circle cx="20.500" cy="6.500" r="5.500" fill="#7b83eb"/><path d="M11 14h19v12a8.500 8.500 0 0 1-8.500 8.500h-2A8.500 8.500 0 0 1 11 26z" fill="#7b83eb"/>
<rect x="0.500" y="10" width="18.500" height="18.500" rx="1.800" fill="#fff"/>
<text x="9.800" y="25" font-family="Liberation Sans" font-weight="700" font-size="14" text-anchor="middle" fill="#4b53bc">T</text></svg>
<svg style="left:427px;top:1027px" width="38" height="36" viewBox="0 0 38 36"><defs><linearGradient id="fo" x1="0" y1="0" x2="0" y2="1"><stop offset="0" stop-color="#ffd96a"/><stop offset="1" stop-color="#f4b528"/></linearGradient></defs>
<path d="M1 3a2 2 0 0 1 2-2h9.500l4 4H35a2 2 0 0 1 2 2v6H1z" fill="#e3a21a"/>
<rect x="1" y="6.500" width="36" height="26.500" rx="2" fill="url(#fo)"/>
<path d="M7.500 33v-6a3 3 0 0 1 3-3h17a3 3 0 0 1 3 3v6z" fill="#1b7fd6"/><rect x="12" y="27.500" width="14" height="2" rx="1" fill="#0d5aa8"/></svg>
<svg style="left:493px;top:1025px" width="38" height="38" viewBox="0 0 38 38"><defs>
<linearGradient id="ed1" x1="0" y1="0" x2="1" y2="1"><stop offset="0" stop-color="#1f9be3"/><stop offset="1" stop-color="#0b4f9c"/></linearGradient>
<linearGradient id="ed2" x1="0" y1="0.600" x2="1" y2="0.200"><stop offset="0" stop-color="#2a9fe6"/><stop offset="0.550" stop-color="#33bfb3"/><stop offset="1" stop-color="#76dc62"/></linearGradient></defs>
<circle cx="19" cy="19" r="18" fill="url(#ed1)"/>
<path d="M1.100 17.500C2.300 8 9.800 1 19 1c10 0 18 7.300 18 16 0 5.300-3.700 8.300-8.300 8.300-4 0-7-1.400-7-3.800 0-1.600 1.300-2.300 1.300-4.400 0-3.300-3.300-6.300-8-6.300-6 0-11.300 3.200-13.900 6.700z" fill="url(#ed2)"/>
<path d="M15.400 14.800c-2.300 2-2.700 4.300-1.700 6.900 1.500 4 6.200 7.200 13 7.200 2.500 0 4.700-.500 6.300-1.400l1.300-3.200c-2 1-4.500 1.300-6.600 1.100-4-.300-7.300-2.200-8.400-5.100-.500-1.500-.300-3.100.600-4.700z" fill="#fff"/>
</svg>
<svg style="left:559px;top:1026px" width="38" height="37" viewBox="0 0 38 37"><defs><linearGradient id="st" x1="0" y1="0" x2="0" y2="1"><stop offset="0" stop-color="#1e5fa8"/><stop offset="1" stop-color="#123f7a"/></linearGradient></defs>
<path d="M10 8V4.500A2.500 2.500 0 0 1 12.500 2h13A2.500 2.500 0 0 1 28 4.500V8" fill="none" stroke="#35b6f2" stroke-width="2.600"/>
<path d="M1 7h36v26a3 3 0 0 1-3 3H4a3 3 0 0 1-3-3z" fill="url(#st)"/>
<rect x="11.500" y="13.500" width="7" height="7" fill="#f25022"/><rect x="19.500" y="13.500" width="7" height="7" fill="#7fba00"/>
<rect x="11.500" y="21.500" width="7" height="7" fill="#00a4ef"/><rect x="19.500" y="21.500" width="7" height="7" fill="#ffb900"/></svg>
<svg style="left:626px;top:1026px" width="38" height="37" viewBox="0 0 38 37"><defs><linearGradient id="pt" x1="0" y1="0" x2="1" y2="1"><stop offset="0" stop-color="#3cc0f5"/><stop offset="1" stop-color="#1878d8"/></linearGradient></defs>
<path d="M17 2C7.500 2 1 9 1 18c0 8 5.500 14 11 14 3 0 4-1.800 3.500-4-.500-2 .500-3.500 2.500-3.500H24c6 0 10-4 10-10C34 7.500 27 2 17 2z" fill="url(#pt)"/>
<circle cx="8.500" cy="19" r="2.800" fill="#e84a2a"/><circle cx="11" cy="10" r="2.800" fill="#4caf50"/><circle cx="19.500" cy="6.500" r="2.800" fill="#f7b500"/><circle cx="19.500" cy="20.500" r="2.300" fill="#fff"/>
<path d="M25.500 9.500l6-1.500.800 8.500h-7z" fill="#f3d9b0"/><rect x="26" y="15.500" width="5.500" height="3" fill="#9a9a9a"/><path d="M27 18.500h3.500l-.500 16.500h-2.500z" fill="#a05a1c"/></svg>
<svg style="left:691px;top:1025px" width="38" height="38" viewBox="0 0 38 38">
<circle cx="19" cy="19" r="18" fill="#fbc116"/>
<path d="M19 1A18 18 0 0 1 34.600 10H19a9 9 0 0 0-7.800 4.500L3.400 10A18 18 0 0 1 19 1z" fill="#e74133"/>
<path d="M3.400 10l7.800 13.500A9 9 0 0 0 19 28l-5.500 8.200A18 18 0 0 1 3.400 10z" fill="#2da94f"/>
<path d="M3.400 10A18 18 0 0 0 13.500 36.200L21 27.800A9 9 0 0 1 11.200 23.500z" fill="#2da94f"/>
<circle cx="19" cy="19" r="8.600" fill="#fff"/><circle cx="19" cy="19" r="6.800" fill="#4285f4"/></svg>
<svg style="left:757.5px;top:1026.5px" width="38" height="35" viewBox="0 0 38 35"><rect x="9" y="1" width="27" height="33" rx="1.500" fill="#103f91"/><rect x="9" y="1" width="27" height="8.500" fill="#41a5ee"/><rect x="9" y="9.500" width="27" height="8" fill="#2b7cd3"/><rect x="9" y="17.500" width="27" height="8" fill="#185abd"/>
<rect x="0.500" y="8" width="18.500" height="18.500" rx="1.800" fill="#185abd"/>
<text x="9.800" y="23" font-family="Liberation Sans" font-weight="700" font-size="15" text-anchor="middle" fill="#fff">W</text></svg>
<svg style="left:823.5px;top:1026.5px" width="38" height="35" viewBox="0 0 38 35"><circle cx="21" cy="17.500" r="16.500" fill="#d35230"/><path d="M21 1a16.500 16.500 0 0 1 16.500 16.500H21z" fill="#ff8f6b"/><path d="M21 17.500h16.500A16.500 16.500 0 0 1 21 34z" fill="#c13b1b"/>
<rect x="0.500" y="8" width="18.500" height="18.500" rx="1.800" fill="#c43e1c"/>
<text x="9.800" y="23" font-family="Liberation Sans" font-weight="700" font-size="15" text-anchor="middle" fill="#fff">P</text></svg>
<svg style="left:889.500px;top:1026.500px" width="38" height="35" viewBox="0 0 38 35">
<rect x="9" y="1" width="27" height="33" rx="1.500" fill="#185c37"/>
<rect x="9" y="1" width="13.500" height="8.500" fill="#21a366"/><rect x="22.500" y="1" width="13.500" height="8.500" fill="#33c481"/>
<rect x="9" y="9.500" width="13.500" height="8" fill="#107c41"/><rect x="22.500" y="9.500" width="13.500" height="8" fill="#21a366"/>
<rect x="9" y="17.500" width="13.500" height="8" fill="#185c37"/><rect x="22.500" y="17.500" width="13.500" height="8" fill="#107c41"/>
<rect x="0.500" y="8" width="18.500" height="18.500" rx="1.800" fill="#107c41"/>
<text x="9.800" y="23" font-family="Liberation Sans" font-weight="700" font-size="15" text-anchor="middle" fill="#fff">X</text></svg>
<svg style="left:955.5px;top:1025.500px" width="37" height="37" viewBox="0 0 37 37"><defs><linearGradient id="sg1" x1="0" y1="0" x2="0" y2="1"><stop offset="0" stop-color="#ff6a3c"/><stop offset="1" stop-color="#ef3f3f"/></linearGradient></defs>
<rect x="0.500" y="0.500" width="36" height="36" rx="4.500" fill="url(#sg1)"/>
<path d="M11 6.500h17l-3.500 5.500H14.500l-1.500 3.500h13.500l3 4.500-5 10.500H8l3.500-5.500h10l1.500-3.500H10L7 17z" fill="#fff"/></svg>
<svg style="left:1021px;top:1017px" width="48" height="46" viewBox="0 0 48 46">
<rect x="10" y="10" width="26" height="22" fill="#0a64b8"/><rect x="14" y="10" width="11" height="11" fill="#1a86d8"/><rect x="25" y="10" width="11" height="11" fill="#3aa5ea"/>
<path d="M9 24l13.500 9L36 24v19a2 2 0 0 1-2 2H11a2 2 0 0 1-2-2z" fill="#1e90e0"/><path d="M9 45l27-17v15a2 2 0 0 1-2 2z" fill="#0f6fc4"/>
<rect x="1" y="17.500" width="17.500" height="17.500" rx="1.800" fill="#0f6cbd"/>
<text x="9.800" y="31.500" font-family="Liberation Sans" font-weight="700" font-size="14" text-anchor="middle" fill="#fff">O</text>
<circle cx="33" cy="13.400" r="11.500" fill="#0f5db4"/><rect x="26" y="8.500" width="14" height="10" rx="1.200" fill="none" stroke="#fff" stroke-width="1.400"/><path d="M26.500 9.500l6.500 5 6.500-5" fill="none" stroke="#fff" stroke-width="1.400"/></svg>
<svg style="left:1088px;top:1026px" width="36" height="34" viewBox="0 0 36 34"><defs><linearGradient id="pr" x1="0" y1="0" x2="1" y2="1"><stop offset="0" stop-color="#91709f"/><stop offset="1" stop-color="#5a356b"/></linearGradient></defs>
<rect x="1" y="1" width="33.500" height="31.500" rx="1.500" fill="url(#pr)" stroke="#4a2a58" stroke-width="0.800"/>
<text x="18" y="24" font-family="Liberation Sans" font-weight="700" font-size="19" text-anchor="middle" fill="#ead8f3">Pr</text></svg>
<svg style="left:1157px;top:1025px" width="30" height="38" viewBox="0 0 30 38">
<rect x="0.800" y="31" width="28.400" height="5.500" rx="1.500" fill="#b5560f"/><rect x="0.800" y="30.500" width="28.400" height="3" fill="#f3efe9"/>
<rect x="0.800" y="3" width="28.400" height="28.500" rx="2" fill="#63c6e2"/>
<path d="M6 11h18M6 17h18M6 23h18" stroke="#0b7a98" stroke-width="1.800" stroke-linecap="round"/>
<path d="M5 1.500v4M11.500 1.500v4M18 1.500v4M24.500 1.500v4" stroke="#0b7a98" stroke-width="2.200" stroke-linecap="round"/></svg>
<svg style="left:1220px;top:1026px" width="36" height="34" viewBox="0 0 36 34"><defs><linearGradient id="ps" x1="0" y1="0" x2="1" y2="1"><stop offset="0" stop-color="#0f66b4"/><stop offset="1" stop-color="#043872"/></linearGradient></defs>
<rect x="1" y="1" width="33.500" height="31.500" rx="1.500" fill="url(#ps)" stroke="#032a58" stroke-width="0.800"/>
<text x="18" y="23.500" font-family="Liberation Sans" font-weight="700" font-size="19" text-anchor="middle" fill="#3ec0f5">Ps</text></svg>
<svg style="left:1285.5px;top:1025.500px" width="37" height="37" viewBox="0 0 37 37"><defs><linearGradient id="sg2" x1="0" y1="0" x2="0" y2="1"><stop offset="0" stop-color="#5697cf"/><stop offset="1" stop-color="#2d6cae"/></linearGradient></defs>
<rect x="0.500" y="0.500" width="36" height="36" rx="4.500" fill="url(#sg2)"/>
<path d="M11 6.500h17l-3.500 5.500H14.500l-1.500 3.500h13.500l3 4.500-5 10.500H8l3.500-5.500h10l1.500-3.500H10L7 17z" fill="#fff"/></svg>
<span class="t" style="left:1817.18px;top:1020.50px;line-height:22px;font-size:16.7px;color:#5a5a5a;letter-spacing:0.681px;">9:39 AM</span>
<span class="t" style="left:1790.45px;top:1045.00px;line-height:22px;font-size:16.7px;color:#5a5a5a;letter-spacing:0.947px;">12/23/2023</span>
</body></html>
